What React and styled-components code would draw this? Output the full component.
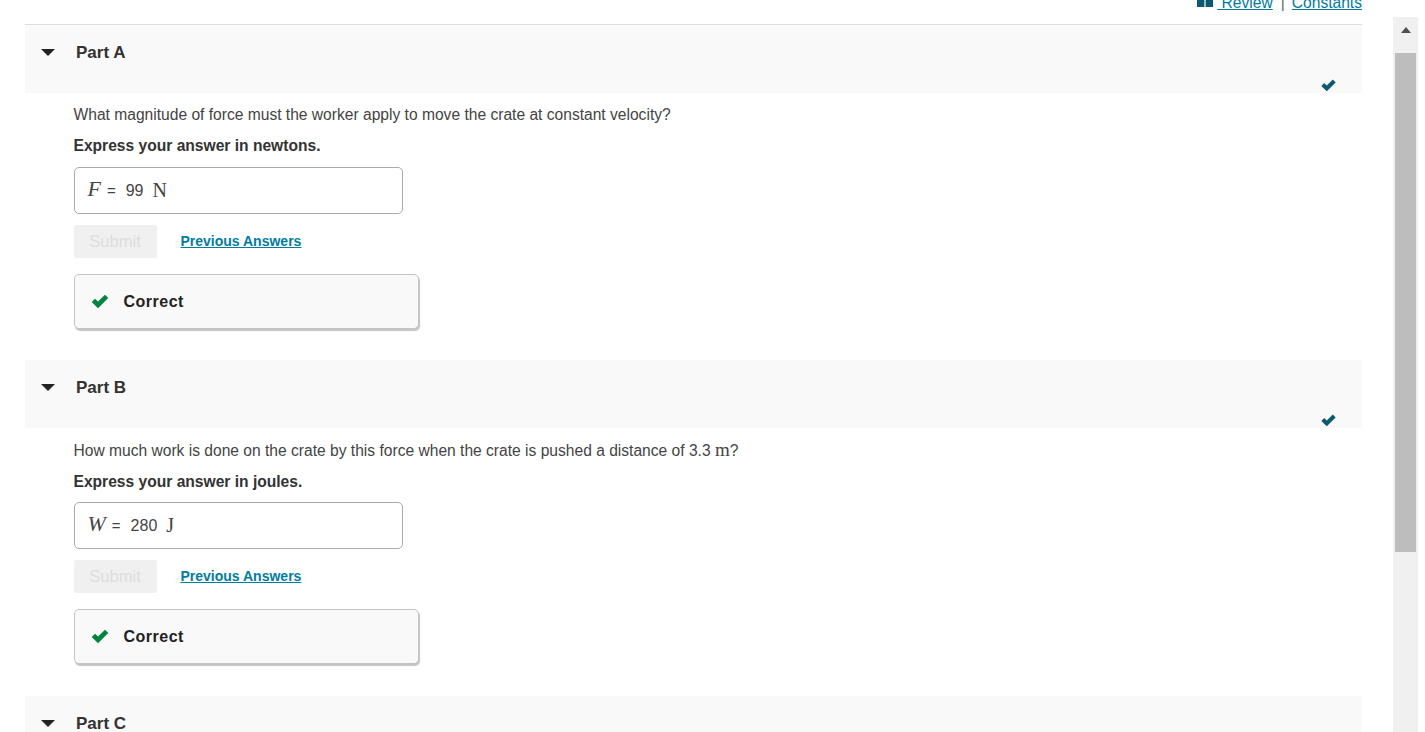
import React from "react";
import styled, { createGlobalStyle } from "styled-components";

const GlobalStyle = createGlobalStyle`
  html, body {
    margin: 0;
    height: 732px;
    overflow: hidden;
    background: #fff;
  }
  body {
    font-family: "Liberation Sans", Arial, sans-serif;
    color: #333;
  }
`;

const Page = styled.div`
  display: flex;
  height: 732px;
  overflow: hidden;
`;

const Main = styled.main`
  width: 1337px;
  margin-left: 25px;
  flex-shrink: 0;
`;

const TopBar = styled.div`
  height: 24px;
  display: flex;
  justify-content: flex-end;
  align-items: flex-end;
  overflow: hidden;
  border-bottom: 1px solid #ddd;
  font-size: 15.6px;
  line-height: 18px;
  box-sizing: content-box;
`;

const TopLinks = styled.div`
  display: flex;
  align-items: center;
  height: 18px;
  margin-bottom: 12px;
  color: #666;
`;

const TopLink = styled.a`
  color: #007c9e;
  text-decoration: underline;
  white-space: pre;
`;

const Divider = styled.span`
  margin: 0 7px 0 8px;
`;

const BookIcon = styled.svg`
  width: 16px;
  height: 14px;
  margin-right: 4px;
  margin-top: -6px;
  display: block;
`;

const PartHeader = styled.div`
  position: relative;
  height: 68px;
  background: #f9f9f9;
  display: flex;
  align-items: flex-start;
  padding: 18px 0 0 16px;
  box-sizing: border-box;
`;

const Caret = styled.span`
  width: 0;
  height: 0;
  border-left: 7px solid transparent;
  border-right: 7px solid transparent;
  border-top: 7px solid #222;
  margin-top: 6px;
`;

const PartTitle = styled.h3`
  margin: 1px 0 0 21px;
  font-size: 17px;
  line-height: 18px;
  font-weight: bold;
  color: #333;
`;

const DoneCheck = styled.svg`
  position: absolute;
  right: 26px;
  bottom: 1px;
  width: 15px;
  height: 13px;
`;

const PartBody = styled.section`
  padding: 12px 0 ${(p) => (p.$tallPrompt ? "32px" : "31px")} 48.5px;
`;

const Prompt = styled.p`
  margin: 0;
  font-size: 15.6px;
  line-height: 19px;
  color: #444;
`;

const Instruction = styled.p`
  margin: 12px 0 0;
  font-size: 15.6px;
  line-height: 19px;
  font-weight: bold;
  color: #333;
`;

const MathUnit = styled.span`
  font-family: "Liberation Serif", "Times New Roman", serif;
  font-size: 19px;
  line-height: 1;
`;

const AnswerBox = styled.div`
  margin-top: ${(p) => (p.$tallPrompt ? "11px" : "12px")};
  width: 329px;
  height: 47px;
  box-sizing: border-box;
  border: 1px solid #aaa;
  border-radius: 5px;
  display: flex;
  align-items: center;
  padding-left: 13px;
  font-size: 16px;
  color: #444;
`;

const MathVar = styled.span`
  font-family: "Liberation Serif", "Times New Roman", serif;
  font-style: italic;
  font-size: 22px;
  margin-top: -3px;
`;

const MathEquals = styled.span`
  margin: 0 10px 0 6px;
  font-size: 15px;
`;

const AnswerUnit = styled(MathUnit)`
  margin: -2px 0 0 9px;
  font-size: 20px;
`;

const ActionRow = styled.div`
  margin-top: 11px;
  display: flex;
  align-items: center;
  height: 33px;
`;

const SubmitButton = styled.button`
  width: 83px;
  height: 33px;
  border: 0;
  border-radius: 2px;
  background: #f0f0f0;
  color: #ddd;
  font-family: inherit;
  font-size: 16.6px;
  padding: 0;
`;

const PreviousLink = styled.a`
  margin: -1px 0 0 24px;
  font-size: 14px;
  font-weight: bold;
  color: #007c9e;
  text-decoration: underline;
`;

const Feedback = styled.div`
  margin-top: 16px;
  width: 345px;
  height: 55px;
  box-sizing: border-box;
  border: 1px solid #c4c4c4;
  border-radius: 5px;
  background: #f9f9f9;
  box-shadow: 1px 2px 1px #c4c4c4;
  display: flex;
  align-items: center;
  padding-left: 16px;
`;

const FeedbackCheck = styled.svg`
  width: 18px;
  height: 15px;
`;

const FeedbackText = styled.span`
  margin-left: 15px;
  font-size: 16px;
  font-weight: bold;
  color: #222;
  letter-spacing: 0.5px;
`;

const Scrollbar = styled.div`
  width: 25px;
  height: 715px;
  margin: 17px 0 0 31px;
  flex-shrink: 0;
  background: #f0f0f0;
  padding: 0 2px;
  box-sizing: border-box;
`;

const ScrollArrow = styled.div`
  height: 36px;
  display: flex;
  justify-content: center;
  padding-top: 10px;
  box-sizing: border-box;
  &::before {
    content: "";
    width: 0;
    height: 0;
    border-left: 5.5px solid transparent;
    border-right: 5.5px solid transparent;
    border-bottom: 6px solid #505050;
  }
`;

const ScrollThumb = styled.div`
  height: 499px;
  background: #bdbdbd;
`;

const CheckPath = ({ color }) => (
  <path d="M0.3 7.2 L3.3 4.2 L6 6.9 L12.3 0.6 L15.3 3.6 L6 12.9 Z" fill={color} />
);

const parts = [
  {
    title: "Part A",
    prompt: "What magnitude of force must the worker apply to move the crate at constant velocity?",
    instruction: "Express your answer in newtons.",
    symbol: "F",
    value: "99",
    unit: "N",
  },
  {
    title: "Part B",
    tallPrompt: true,
    prompt: (
      <>
        How much work is done on the crate by this force when the crate is pushed a distance of 3.3 <MathUnit>m</MathUnit>?
      </>
    ),
    instruction: "Express your answer in joules.",
    symbol: "W",
    value: "280",
    unit: "J",
  },
];

const Part = ({ title, tallPrompt, prompt, instruction, symbol, value, unit }) => (
  <>
    <PartHeader>
      <Caret />
      <PartTitle>{title}</PartTitle>
      <DoneCheck viewBox="0 0 15.6 13.6">
        <CheckPath color="#0b5a70" />
      </DoneCheck>
    </PartHeader>
    <PartBody $tallPrompt={tallPrompt}>
      <Prompt>{prompt}</Prompt>
      <Instruction>{instruction}</Instruction>
      <AnswerBox $tallPrompt={tallPrompt}>
        <MathVar>{symbol}</MathVar>
        <MathEquals>=</MathEquals>
        {value}
        <AnswerUnit>{unit}</AnswerUnit>
      </AnswerBox>
      <ActionRow>
        <SubmitButton disabled>Submit</SubmitButton>
        <PreviousLink href="#">Previous Answers</PreviousLink>
      </ActionRow>
      <Feedback>
        <FeedbackCheck viewBox="0 0 15.6 13.6">
          <CheckPath color="#00843d" />
        </FeedbackCheck>
        <FeedbackText>Correct</FeedbackText>
      </Feedback>
    </PartBody>
  </>
);

export default function App() {
  return (
    <Page>
      <GlobalStyle />
      <Main>
        <TopBar>
          <TopLinks>
            <BookIcon viewBox="0 0 16 14">
              <path d="M0 0 H7.4 V14 H0 Z M8.6 0 H16 V14 H8.6 Z" fill="#0b5a70" />
            </BookIcon>
            <TopLink href="#"> Review</TopLink>
            <Divider>|</Divider>
            <TopLink href="#">Constants</TopLink>
          </TopLinks>
        </TopBar>
        {parts.map((part) => (
          <Part key={part.title} {...part} />
        ))}
        <PartHeader>
          <Caret />
          <PartTitle>Part C</PartTitle>
        </PartHeader>
      </Main>
      <Scrollbar>
        <ScrollArrow />
        <ScrollThumb />
      </Scrollbar>
    </Page>
  );
}
